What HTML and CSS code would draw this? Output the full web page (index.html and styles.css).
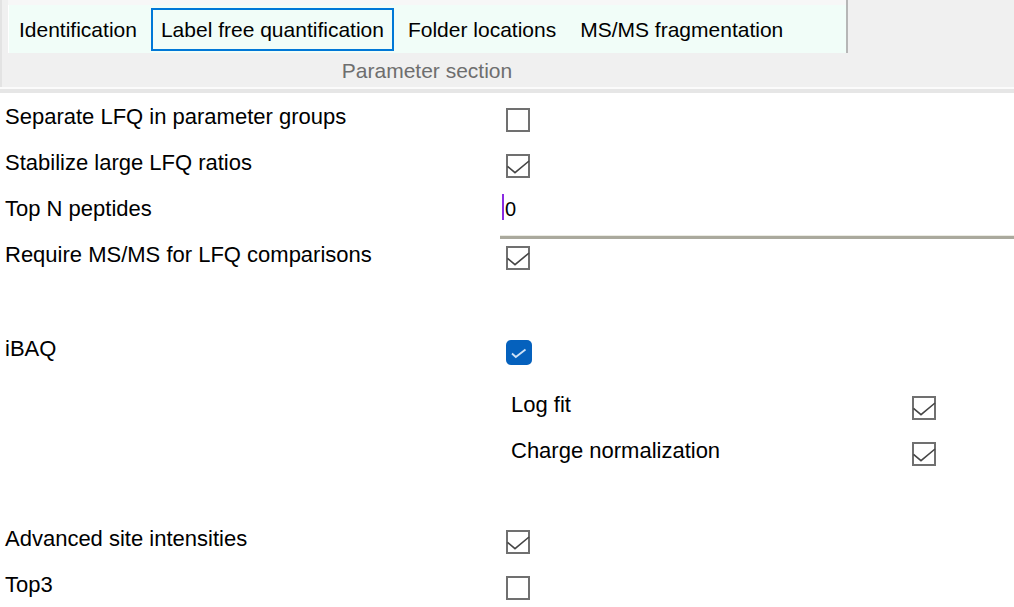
FILE: index.html
```html
<!DOCTYPE html>
<html>
<head>
<meta charset="utf-8">
<link rel="stylesheet" href="styles.css">
</head>
<body>
<div class="ribbon">
  <div class="group">
    <div class="group-top">
      <div class="tabs">
        <span class="tab">Identification</span>
        <span class="tab active">Label free quantification</span>
        <span class="tab">Folder locations</span>
        <span class="tab">MS/MS fragmentation</span>
      </div>
    </div>
    <div class="group-title">Parameter section</div>
  </div>
</div>
<div class="ribbon-edge"></div>
<div class="form">
  <div class="row">
    <div class="label">Separate LFQ in parameter groups</div>
    <svg class="cb" viewBox="0 0 24 24"><rect x="1" y="1" width="22" height="22" class="cb-box"/></svg>
  </div>
  <div class="row">
    <div class="label">Stabilize large LFQ ratios</div>
    <svg class="cb" viewBox="0 0 24 24"><rect x="1" y="1" width="22" height="22" class="cb-box"/><polyline points="1.5,12.3 9,18.7 23,7" class="cb-check"/></svg>
  </div>
  <div class="row">
    <div class="label">Top N peptides</div>
    <div class="field"><span class="caret"></span><span class="value">0</span></div>
  </div>
  <div class="row">
    <div class="label">Require MS/MS for LFQ comparisons</div>
    <svg class="cb" viewBox="0 0 24 24"><rect x="1" y="1" width="22" height="22" class="cb-box"/><polyline points="1.5,12.3 9,18.7 23,7" class="cb-check"/></svg>
  </div>
  <div class="spacer-a"></div>
  <div class="row">
    <div class="label">iBAQ</div>
    <svg class="cb cb-blue" viewBox="0 0 26 25"><rect x="0" y="0" width="26" height="25" rx="5" ry="5" class="blue-box"/><polyline points="6,13.5 9.8,17 19.5,9.5" class="blue-check"/></svg>
  </div>
  <div class="sub">
    <div class="row">
      <div class="label sub-label">Log fit</div>
      <svg class="cb" viewBox="0 0 24 24"><rect x="1" y="1" width="22" height="22" class="cb-box"/><polyline points="1.5,12.3 9,18.7 23,7" class="cb-check"/></svg>
    </div>
    <div class="row">
      <div class="label sub-label">Charge normalization</div>
      <svg class="cb" viewBox="0 0 24 24"><rect x="1" y="1" width="22" height="22" class="cb-box"/><polyline points="1.5,12.3 9,18.7 23,7" class="cb-check"/></svg>
    </div>
  </div>
  <div class="spacer-b"></div>
  <div class="row">
    <div class="label">Advanced site intensities</div>
    <svg class="cb" viewBox="0 0 24 24"><rect x="1" y="1" width="22" height="22" class="cb-box"/><polyline points="1.5,12.3 9,18.7 23,7" class="cb-check"/></svg>
  </div>
  <div class="row">
    <div class="label">Top3</div>
    <svg class="cb" viewBox="0 0 24 24"><rect x="1" y="1" width="22" height="22" class="cb-box"/></svg>
  </div>
</div>
</body>
</html>
```
FILE: styles.css
```css
html, body {
  margin: 0;
  padding: 0;
  background: #ffffff;
  font-family: "Liberation Sans", Arial, sans-serif;
  color: #000;
  overflow: hidden;
}

.ribbon {
  height: 87px;
  background: #f0f0f0;
  border-left: 2px solid #e3e3e3;
  padding-left: 6px;
  display: flex;
}

.group {
  width: 840px;
  display: flex;
  flex-direction: column;
}

.group-top {
  background: #f7f7f7;
  padding-top: 5px;
  border-right: 2px solid #b6b6b6;
  height: 48px;
}

.tabs {
  height: 48px;
  background: #f1fdf8;
  border-left: 1px solid #ffffff;
  display: flex;
  align-items: flex-start;
  gap: 4px;
  padding-top: 3px;
  box-sizing: border-box;
}

.tab {
  font-size: 21px;
  line-height: 39px;
  height: 39px;
  padding: 0 8px;
  border: 2px solid transparent;
  white-space: nowrap;
}

.tab.active {
  border-color: #0078d7;
}

.group-title {
  height: 34px;
  line-height: 36px;
  text-align: center;
  font-size: 21px;
  color: #6e6e6e;
  padding-right: 2px;
}

.ribbon-edge {
  height: 4px;
  border-top: 2px solid #fbfbfb;
  background: #e6e6e6;
}

.form {
  padding-top: 7px;
  display: flex;
  flex-direction: column;
}

.row {
  height: 46px;
  display: flex;
  align-items: flex-start;
}

.label {
  width: 495px;
  padding-left: 5px;
  padding-top: 4px;
  font-size: 22px;
  line-height: 26px;
  white-space: nowrap;
}

.sub-label {
  width: 395px;
}

.cb {
  width: 24px;
  height: 24px;
  margin-top: 8px;
  margin-left: 6px;
  flex: none;
}

.cb-blue {
  width: 26px;
  height: 25px;
}

.cb-box {
  fill: #ffffff;
  stroke: #707070;
  stroke-width: 2;
}

.cb-check {
  fill: none;
  stroke: #454545;
  stroke-width: 1.6;
}

.blue-box {
  fill: #0561bd;
}

.blue-check {
  fill: none;
  stroke: #cfe2f6;
  stroke-width: 1.8;
}

.field {
  flex: 1;
  height: 44px;
  border-bottom: 3px solid #aaa99d;
  background: linear-gradient(to bottom, transparent 43px, #ebebe3 43px);
  display: flex;
  align-items: flex-start;
}

.caret {
  width: 2px;
  height: 26px;
  margin-top: 2px;
  margin-left: 2px;
  background: #8a2be2;
}

.value {
  font-size: 20px;
  line-height: 26px;
  margin-top: 4px;
  margin-left: 1px;
}

.spacer-a {
  height: 48px;
}

.sub {
  padding-top: 10px;
  padding-left: 506px;
}

.spacer-b {
  height: 42px;
}
```
